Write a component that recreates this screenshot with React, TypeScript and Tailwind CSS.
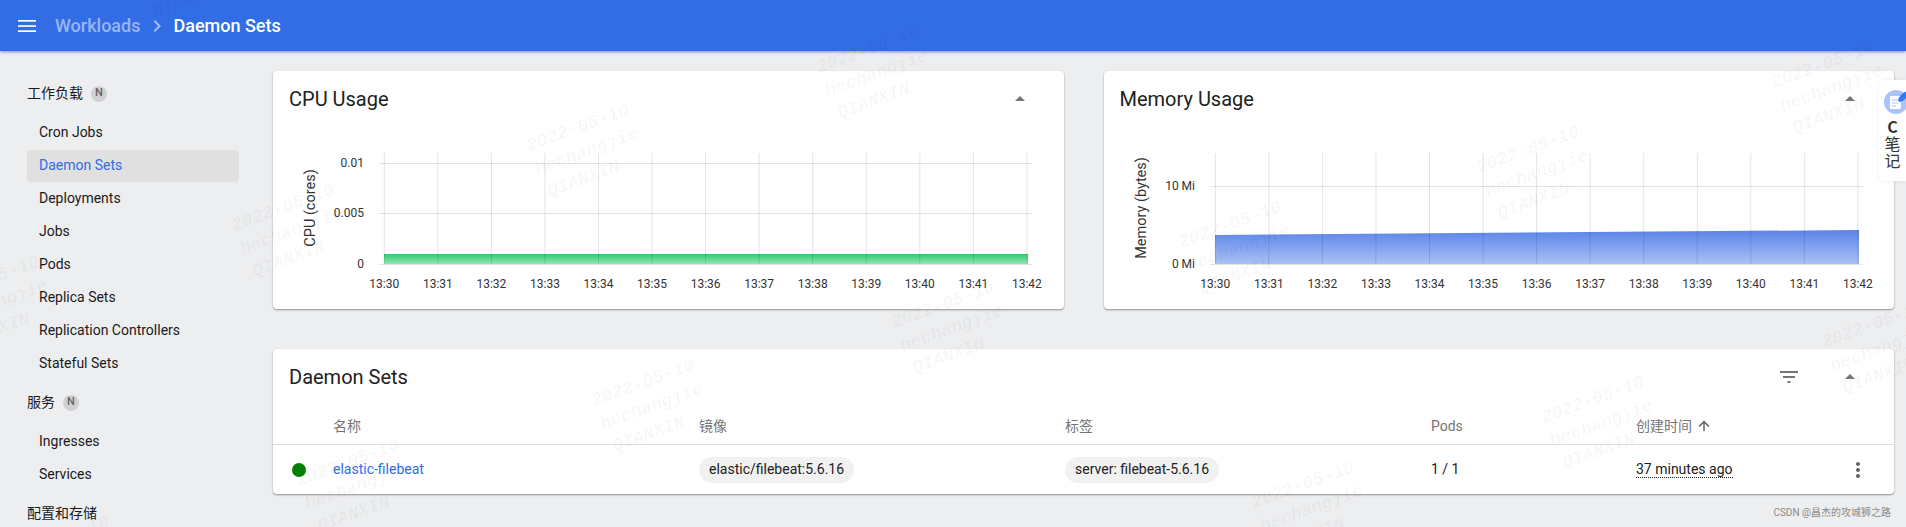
import React from "react";

const marks = [
  "left-[290px] top-[228px]",
  "left-[585px] top-[148px]",
  "left-[875px] top-[70px]",
  "left-[190px] top-[-30px]",
  "left-[1237px] top-[245px]",
  "left-[1535px] top-[170px]",
  "left-[1830px] top-[85px]",
  "left-[950px] top-[325px]",
  "left-[650px] top-[403px]",
  "left-[355px] top-[483px]",
  "left-[1600px] top-[420px]",
  "left-[1310px] top-[505px]",
  "left-[1880px] top-[345px]",
  "left-[-5px] top-[300px]",
  "left-[65px] top-[560px]",
];

const times = ["13:30","13:31","13:32","13:33","13:34","13:35","13:36","13:37","13:38","13:39","13:40","13:41","13:42"];
const X0 = 111.3;
const DX = 53.55;

function Chart({ id, axis, yTicks, area, top, bottom }: { id: string; axis: string; yTicks: { label: string; y: number }[]; area: string; top: string; bottom: string }) {
  return (
    <svg width="790" height="182" className="block" style={{ fontFamily: "Roboto, sans-serif" }}>
      <defs>
        <linearGradient id={id} x1="0" y1="0" x2="0" y2="1">
          <stop offset="0" stopColor={top} />
          <stop offset="1" stopColor={bottom} />
        </linearGradient>
      </defs>
      <path d={area} fill={`url(#${id})`} />
      {times.map((t, i) => {
        const x = X0 + DX * i;
        return (
          <g key={t}>
            <line x1={x} x2={x} y1="26" y2="137" stroke="#000" strokeOpacity="0.11" />
            <text x={x} y="161" textAnchor="middle" fontSize="12" fill="#333">{t}</text>
          </g>
        );
      })}
      {yTicks.map((t) => (
        <g key={t.label}>
          <line x1="106" x2="759" y1={t.y + 0.5} y2={t.y + 0.5} stroke="#000" strokeOpacity="0.11" />
          <text x="91" y={t.y + 4} textAnchor="end" fontSize="12" fill="#333">{t.label}</text>
        </g>
      ))}
      <text transform="translate(41.5 81) rotate(-90)" textAnchor="middle" fontSize="14.5" fill="#333">{axis}</text>
    </svg>
  );
}

function DropUp() {
  return (
    <svg width="24" height="24" viewBox="0 0 24 24" className="fill-[#757575]"><path d="M7 14l5-5 5 5z" /></svg>
  );
}

function Card({ title, children, action }: { title: string; children: React.ReactNode; action?: React.ReactNode }) {
  return (
    <section className="rounded bg-white shadow-[0_1px_2px_rgba(0,0,0,0.4)]">
      <header className="flex h-14 items-center pl-4">
        <h2 className="text-[20px] font-normal text-[#212121]">{title}</h2>
        <div className="ml-auto flex items-center">
          {action}
          <div className="ml-[38px] mr-[32px] mt-[-1px] flex"><DropUp /></div>
        </div>
      </header>
      {children}
    </section>
  );
}

function Group({ label, badge }: { label: string; badge?: boolean }) {
  return (
    <div className="flex h-[33px] items-center text-[14px] text-[#1a1a1a]">
      <span>{label}</span>
      {badge && (
        <span className="ml-[8px] flex h-4 w-4 items-center justify-center rounded-full bg-[#d0d1d3] text-[11px] font-medium text-[#666]">N</span>
      )}
    </div>
  );
}

function Item({ label, active }: { label: string; active?: boolean }) {
  return (
    <div className={active ? "mt-px flex h-8 items-center rounded-sm bg-[#e0e0e0] pb-px pl-3 text-[14px] text-[#326de6]" : "flex h-[33px] items-center pl-3 text-[14px] text-[#1a1a1a]"}>
      {label}
    </div>
  );
}

export default function App() {
  return (
    <div className="relative flex h-[527px] w-[1906px] flex-col overflow-hidden bg-[#edeef0] font-['Roboto','Noto_Sans_CJK_SC',sans-serif]">
      <header className="relative z-10 flex h-[51px] items-center bg-[#326de6] shadow-[0_1px_3px_rgba(0,0,0,0.4)]">
        <svg width="18" height="12" viewBox="0 0 18 12" className="ml-[18px] fill-white">
          <rect y="0" width="18" height="1.7" />
          <rect y="5.2" width="18" height="1.7" />
          <rect y="10.3" width="18" height="1.7" />
        </svg>
        <span className="ml-[19px] text-[18px] font-medium text-white/50">Workloads</span>
        <svg width="24" height="24" viewBox="0 0 24 24" className="ml-[5px] fill-white/55"><path d="M10 6L8.59 7.41 13.17 12l-4.58 4.59L10 18l6-6z" /></svg>
        <span className="ml-[4px] text-[18px] font-medium text-white">Daemon Sets</span>
      </header>

      <div className="flex min-h-0 flex-1">
        <aside className="w-[273px] shrink-0 pl-[27px] pr-[34px] pt-[26px]">
          <Group label="工作负载" badge />
          <div className="mt-[6px]">
            <Item label="Cron Jobs" />
            <Item label="Daemon Sets" active />
            <Item label="Deployments" />
            <Item label="Jobs" />
            <Item label="Pods" />
            <Item label="Replica Sets" />
            <Item label="Replication Controllers" />
            <Item label="Stateful Sets" />
          </div>
          <div className="mt-[6px]"><Group label="服务" badge /></div>
          <div className="mt-[6px]">
            <Item label="Ingresses" />
            <Item label="Services" />
          </div>
          <div className="mt-[6px]"><Group label="配置和存储" /></div>
        </aside>

        <main className="w-[1621px] pt-5">
          <div className="grid grid-cols-2 gap-x-10 gap-y-10">
            <Card title="CPU Usage">
              <Chart
                id="g1"
                axis="CPU (cores)"
                yTicks={[{ label: "0.01", y: 36 }, { label: "0.005", y: 86 }, { label: "0", y: 137 }]}
                area="M111 127 H755 V137 H111 Z"
                top="#2fcb70"
                bottom="#93e4b3"
              />
            </Card>
            <Card title="Memory Usage">
              <Chart
                id="g2"
                axis="Memory (bytes)"
                yTicks={[{ label: "10 Mi", y: 59 }, { label: "0 Mi", y: 137 }]}
                area="M111 108 L755 103 V137 H111 Z"
                top="#5a84e8"
                bottom="#a9c1f4"
              />
            </Card>
            <div className="col-span-2">
              <Card
                title="Daemon Sets"
                action={
                  <svg width="24" height="24" viewBox="0 0 24 24" className="mr-[-1px] fill-[#757575]"><path d="M10.5 18h3v-2h-3v2zM3 6v2h18V6H3zm3 7h12v-2H6v2z" /></svg>
                }
              >
                <div className="grid h-10 grid-cols-[60px_366px_366px_366px_205px_1fr] items-center border-b border-[#dedede] pt-[3px] text-[14px] text-[#757575]">
                  <span />
                  <span>名称</span>
                  <span>镜像</span>
                  <span>标签</span>
                  <span>Pods</span>
                  <span className="flex items-center">
                    创建时间
                    <svg width="16" height="16" viewBox="0 0 24 24" className="ml-[4px] fill-[#555]"><path d="M4 12l1.41 1.41L11 7.83V20h2V7.83l5.58 5.59L20 12l-8-8-8 8z" /></svg>
                  </span>
                </div>
                <div className="grid h-[49px] grid-cols-[60px_366px_366px_366px_205px_1fr] items-center text-[14px] text-[#212121]">
                  <span className="ml-[19px] h-[14px] w-[14px] rounded-full bg-[#008000]" />
                  <span className="text-[#326de6]">elastic-filebeat</span>
                  <span><span className="inline-flex h-[26px] items-center rounded-full bg-[#f1f1f1] px-[10px] text-[14px]">elastic/filebeat:5.6.16</span></span>
                  <span><span className="inline-flex h-[26px] items-center rounded-full bg-[#f1f1f1] px-[10px] text-[14px]">server: filebeat-5.6.16</span></span>
                  <span>1 / 1</span>
                  <span className="flex items-center justify-between pr-[24px]">
                    <span className="border-b border-dotted border-[#212121] leading-[16px]">37 minutes ago</span>
                    <svg width="24" height="24" viewBox="0 0 24 24" className="fill-[#616161]"><path d="M12 8c1.1 0 2-.9 2-2s-.9-2-2-2-2 .9-2 2 .9 2 2 2zm0 2c-1.1 0-2 .9-2 2s.9 2 2 2 2-.9 2-2-.9-2-2-2zm0 6c-1.1 0-2 .9-2 2s.9 2 2 2 2-.9 2-2-.9-2-2-2z" /></svg>
                  </span>
                </div>
              </Card>
            </div>
          </div>
        </main>
      </div>

      <div className="pointer-events-none absolute inset-0 z-20">
        {marks.map((m) => (
          <div
            key={m}
            className={`absolute ${m} flex w-[130px] translate-x-[-53px] -translate-y-1/2 -rotate-20 flex-col text-[18px] leading-[25px] font-bold text-black/[0.04] italic font-['Liberation_Mono',monospace] whitespace-nowrap`}
          >
            <span>2022-05-10</span>
            <span>hechangjie</span>
            <span className="pl-1">QIANXIN</span>
          </div>
        ))}
      </div>

      <aside className="absolute right-0 top-[80px] z-30 flex h-[101px] w-[27px] flex-col items-center rounded-l-md bg-white pt-[10px] text-[16px] leading-[17px] text-[#333] shadow-[0_0_4px_rgba(0,0,0,0.08)] font-['Noto_Sans_CJK_SC',sans-serif]">
        <svg width="24" height="24" viewBox="0 0 24 24" className="ml-[6px] shrink-0">
          <circle cx="12" cy="12" r="12" fill="#a9c3fb" />
          <rect x="6" y="6" width="11" height="13" rx="1" fill="#fff" />
          <path d="M8 10h6M8 13h6M8 16h4" stroke="#a9c3fb" strokeWidth="1" />
          <path d="M24 1c-5 1-9 5-10 10l2 1c5-1 8-6 8-11z" fill="#2f7bf6" />
        </svg>
        <span className="mt-[4px] font-bold">C</span>
        <span>笔</span>
        <span>记</span>
      </aside>

      <div className="absolute bottom-[8px] right-[15px] z-30 text-[10px] leading-[13px] text-[#8b8b8b]">CSDN @昌杰的攻城狮之路</div>
    </div>
  );
}
